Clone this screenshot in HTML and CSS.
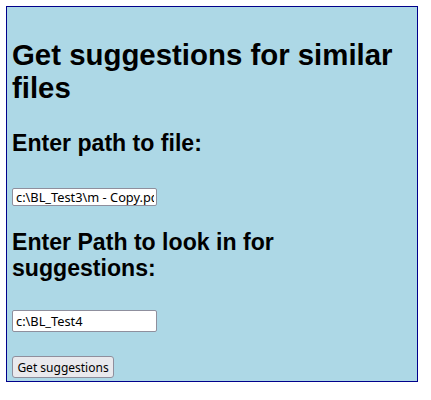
FILE: index.html
```html
<!DOCTYPE html>
<html>
<head>
<meta charset="utf-8">
<title>Get suggestions</title>
<link rel="stylesheet" href="styles.css">
</head>
<body>
<div class="panel">
  <h1 class="title">Get suggestions for similar files</h1>
  <h2 class="label label-first">Enter path to file:</h2>
  <div class="field field-file"><input class="path path-small" type="text" value="c:\BL_Test3\m - Copy.pdf"></div>
  <h2 class="label label-second">Enter Path to look in for suggestions:</h2>
  <div class="field field-dir"><input class="path path-large" type="text" value="c:\BL_Test4"></div>
  <div class="actions"><button class="btn" type="button">Get suggestions</button></div>
</div>
</body>
</html>
```

FILE: styles.css
```css
html, body {
  margin: 0;
  padding: 0;
  background: #ffffff;
}

body {
  font-family: "Liberation Sans", Arial, sans-serif;
  color: #000;
}

.panel {
  margin: 6px;
  width: 400px;
  height: 364px;
  padding: 5px 5px 5px 5px;
  border: 1px solid #00008b;
  background: #add8e6;
  display: flex;
  flex-direction: column;
  align-items: flex-start;
}

.title {
  margin: 26px 0 0 0;
  font-size: 29.4px;
  line-height: 33px;
  font-weight: bold;
}

.label {
  font-size: 23.1px;
  line-height: 26px;
  font-weight: bold;
  margin: 0;
}

.label-first {
  margin-top: 26px;
}

.label-second {
  margin-top: 23px;
}

.field {
  display: flex;
}

.field-file {
  margin-top: 32px;
}

.field-dir {
  margin-top: 29px;
}

.path {
  box-sizing: border-box;
  width: 145px;
  margin: 0;
  padding: 0 2px 0 3px;
  border: 1px solid #8f8f9d;
  border-radius: 2px;
  background: #fff;
  font-family: "Noto Sans", "DejaVu Sans", sans-serif;
  font-size: 12.8px;
  color: #000;
}

.path-small {
  height: 18px;
}

.path-large {
  height: 22px;
}

.actions {
  margin-top: 24px;
}

.btn {
  box-sizing: border-box;
  height: 22px;
  width: 102px;
  margin: 0;
  padding: 0 4px;
  border: 1px solid #8f8f9d;
  border-radius: 3px;
  background: #e9e9ed;
  font-family: "Noto Sans", "DejaVu Sans", sans-serif;
  font-size: 12px;
  color: #000;
}
```
